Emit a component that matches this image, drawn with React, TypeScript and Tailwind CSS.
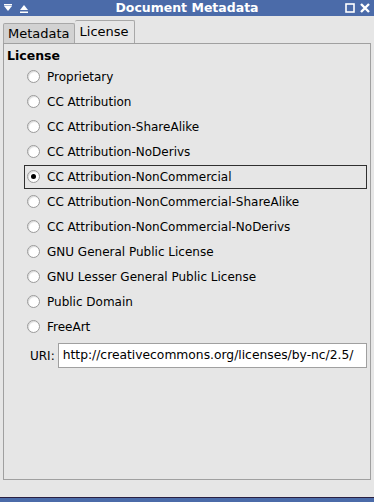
import React, { useState } from 'react';

const licenses = [
  'Proprietary',
  'CC Attribution',
  'CC Attribution-ShareAlike',
  'CC Attribution-NoDerivs',
  'CC Attribution-NonCommercial',
  'CC Attribution-NonCommercial-ShareAlike',
  'CC Attribution-NonCommercial-NoDerivs',
  'GNU General Public License',
  'GNU Lesser General Public License',
  'Public Domain',
  'FreeArt',
];

const Radio: React.FC<{ on: boolean }> = ({ on }) => (
  <span className="w-[13px] h-[13px] rounded-full border border-[#9a9a9a] bg-white flex items-center justify-center shadow-[inset_1px_1px_1px_rgba(0,0,0,0.15)]">
    {on && <span className="w-[5px] h-[5px] rounded-full bg-black" />}
  </span>
);

const App: React.FC = () => {
  const [selected, setSelected] = useState(4);

  return (
    <div className="w-[374px] h-[502px] bg-[#e6e6e6] flex flex-col overflow-hidden text-[12px] text-black" style={{ fontFamily: '"DejaVu Sans", sans-serif' }}>
      {/* title bar */}
      <div className="h-[16px] bg-[#4b6ba9] flex items-center px-[3px] text-white">
        <div className="flex items-center gap-[6px] w-[40px]">
          <svg width="10" height="9" viewBox="0 0 10 9"><path d="M1 2h8L5 7z" fill="white" /><rect x="1" y="0" width="8" height="1.5" fill="white" /></svg>
          <svg width="10" height="9" viewBox="0 0 10 9"><path d="M1 6h8L5 1z" fill="white" /><rect x="1" y="7.5" width="8" height="1.5" fill="white" /></svg>
        </div>
        <div className="flex-1 text-center font-bold text-[12.5px] leading-none">Document Metadata</div>
        <div className="flex items-center gap-[5px] w-[40px] justify-end pr-[1px]">
          <svg width="10" height="10" viewBox="0 0 10 10"><rect x="1" y="1" width="8" height="8" fill="none" stroke="white" strokeWidth="1.6" /></svg>
          <svg width="10" height="10" viewBox="0 0 10 10"><path d="M1 1L9 9M9 1L1 9" stroke="white" strokeWidth="2.4" /></svg>
        </div>
      </div>

      {/* tabs */}
      <div className="flex items-end h-[27px] px-[3px] text-[13px]">
        <div className="h-[20px] px-[4px] flex items-center bg-[#d2d2d2] border border-[#a8a8a8] border-b-0 rounded-t-[2px]">Metadata</div>
        <div className="h-[23px] px-[5px] flex items-center bg-[#e6e6e6] border border-[#a8a8a8] border-b-0 border-l-0 rounded-t-[2px]">License</div>
      </div>

      {/* panel */}
      <div className="mx-[3px] h-[437px] border border-[#a0a0a0] px-[3px] pt-[4px]">
        <div className="font-bold leading-[16px] text-[12.5px]">License</div>
        <div className="flex flex-col">
          {licenses.map((l, i) => (
            <div key={l} className="h-[25px] flex items-center pl-[17px]" onClick={() => setSelected(i)}>
              <div className={`flex-1 h-[24px] flex items-center pl-[2px] gap-[7px] ${i === selected ? 'border border-[#303030]' : 'border border-transparent'}`}>
                <Radio on={i === selected} />
                <span>{l}</span>
              </div>
            </div>
          ))}
        </div>
        <div className="flex items-center mt-[4px] pl-[23px] gap-[3px]">
          <span>URI:</span>
          <div className="flex-1 h-[25px] bg-white border border-[#a0a0a0] flex items-center px-[4px] whitespace-nowrap overflow-hidden text-[12.3px]">
            http://creativecommons.org/licenses/by-nc/2.5/
          </div>
        </div>
      </div>

      <div className="flex-1" />
      <div className="h-[1px] bg-[#2a2040]" />
      <div className="h-[4px] bg-[#4b6ba9]" />
    </div>
  );
};

export default App;
